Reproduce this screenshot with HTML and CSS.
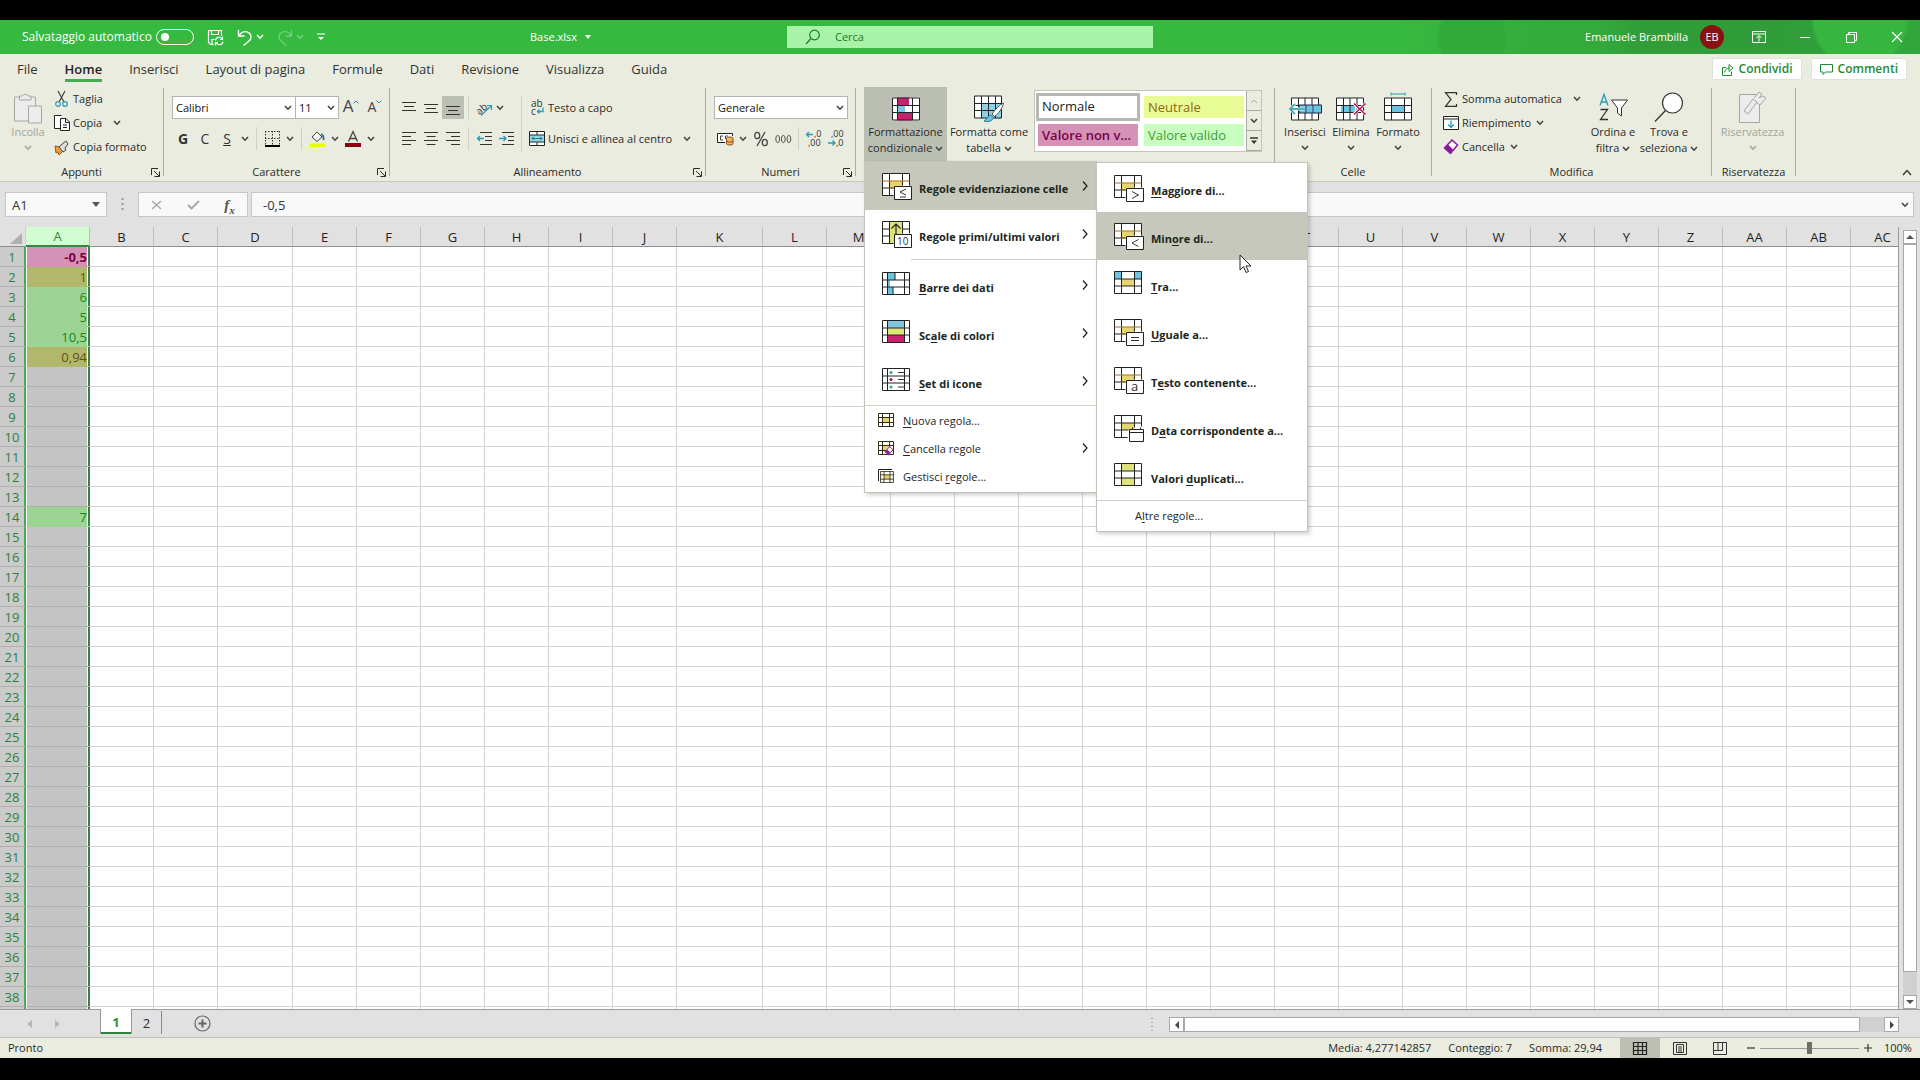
FILE: index.html
```html
<!DOCTYPE html>
<html lang="it">
<head>
<meta charset="utf-8">
<title>Base.xlsx</title>
<link rel="stylesheet" href="styles.css">
</head>
<body>
<svg class="defs" aria-hidden="true">
  <symbol id="chev" viewBox="0 0 8 6"><path d="M1 1l3 3.2L7 1" fill="none" stroke="currentColor" stroke-width="1.6"/></symbol>
  <symbol id="launch" viewBox="0 0 9 9"><path d="M.5 7V.5H7M3 3l5 5M8.500 3.500V8.500H3.500" fill="none" stroke="currentColor"/></symbol>
  <symbol id="right" viewBox="0 0 6 10"><path d="M1 .5L5 5 1 9.500" fill="none" stroke="currentColor" stroke-width="1.3"/></symbol>
  <symbol id="lines" viewBox="0 0 28 23"><path d="M.5.5h27v22H.5zM7.500.5v22M20.500.5v22M.5 8h27M.5 15h27" fill="none" stroke="#222"/></symbol>
  <symbol id="cellrule" viewBox="0 0 30 27">
    <path d="M.5.5h27v22H.5z" fill="#fff"/><path d="M7.500 8h13v7h-13z" fill="#e6d470"/>
    <path d="M.5.5h27M.5.5v22h11M7.500.5v22M20.500.5v12M27.500.5v12M.5 15h11" fill="none" stroke="#222"/><path d="M.5 8h27M7.500 15h5" stroke="#a8771c" fill="none"/>
    <path d="M12.500 13.500h17v13h-17z" fill="#fff" stroke="#222"/>
  </symbol>
  <symbol id="smallgrid" viewBox="0 0 16 14"><path d="M.5.5h15v13H.5z" fill="#fff"/><path d="M4.500 4.500h7v5h-7z" fill="#e6d470"/><path d="M.5.5h15v13H.5zM4.500.5v13M11.500.5v13M.5 4.500h15M.5 9.500h15" fill="none" stroke="#332d12"/></symbol>
  <symbol id="eraser" viewBox="0 0 16 16"><path d="M1.500 9l7.500-8 5.500 5-7 8.500z" fill="#fff" stroke="#8a1a9b" stroke-width="1.500"/><path d="M1.500 9L5 5.500l5 5-3 4z" fill="#8a1a9b"/></symbol>
</svg>

<header class="titlebar">
  <div class="quick">
    <label class="autosave">Salvataggio automatico <input type="checkbox" class="switch"></label>
    <button class="plain q-save" aria-label="Salva"><svg width="17" height="17" viewBox="0 0 17 17" fill="none" stroke="#fff" stroke-width="1.200"><path d="M7 15.500H3.500l-2-2V1.500h13V7M4.500 1.500v4h7v-4M5 15.500v-5h2.500"/><path d="M8.500 11.500a3.500 3.500 0 0 1 6.500-1.500M15.500 7.500V10.500H13M16 12.500a3.500 3.500 0 0 1-6.500 1.500M8.500 16.500v-3H11"/></svg></button>
    <button class="plain" aria-label="Annulla"><svg width="16" height="17" viewBox="0 0 16 17" fill="none" stroke="#fff" stroke-width="1.400"><path d="M1.500 1v6h6M1.800 6.700C5 2 9 2 11.500 3.500c4 2.600 2.500 7 .5 8.500L6.500 16.500"/></svg><svg class="chev" width="8" height="6"><use href="#chev"/></svg></button>
    <button class="plain dim" aria-label="Ripeti"><svg width="16" height="17" viewBox="0 0 16 17" fill="none" stroke="#fff" stroke-width="1.400"><path d="M14.500 1v6h-6M14.200 6.700C11 2 7 2 4.500 3.500c-4 2.600-2.500 7-.5 8.500l5.500 4.500"/></svg><svg class="chev" width="8" height="6"><use href="#chev"/></svg></button>
    <button class="plain" aria-label="Personalizza"><svg width="8" height="8" viewBox="0 0 8 8"><path d="M0 1h8" stroke="#fff"/><path d="M1 4h6L4 7z" fill="#fff"/></svg></button>
  </div>
  <div class="doc">Base.xlsx <svg width="6" height="4" viewBox="0 0 6 4"><path d="M0 0h6L3 4z" fill="#fff"/></svg></div>
  <label class="search"><svg width="16" height="16" viewBox="0 0 16 16" fill="none" stroke="#1c7a2a" stroke-width="1.200"><circle cx="9.500" cy="6" r="4.800"/><path d="M6 9.500L1 15"/></svg><input type="text" placeholder="Cerca" aria-label="Cerca"></label>
  <div class="account">
    <span>Emanuele Brambilla</span><span class="avatar">EB</span>
    <button class="win" aria-label="Opzioni barra multifunzione"><svg width="14" height="12" viewBox="0 0 14 12" fill="none" stroke="#fff"><path d="M.5.5h13v11H.5zM.5 3h13M7 10.500V5M4.500 7L7 4.500 9.500 7"/></svg></button>
    <button class="win" aria-label="Riduci"><svg width="10" height="12" viewBox="0 0 10 12"><path d="M0 6.500h10" stroke="#fff"/></svg></button>
    <button class="win" aria-label="Ripristina"><svg width="11" height="11" viewBox="0 0 11 11" fill="none" stroke="#fff"><path d="M.5 2.500h8v8h-8zM2.500 2.500v-2h8v8h-2"/></svg></button>
    <button class="win" aria-label="Chiudi"><svg width="12" height="12" viewBox="0 0 12 12"><path d="M1 1l10 10M11 1L1 11" stroke="#fff" stroke-width="1.200"/></svg></button>
  </div>
</header>

<nav class="tabs">
  <a href="#">File</a><a href="#" class="on">Home</a><a href="#">Inserisci</a><a href="#">Layout di pagina</a><a href="#">Formule</a><a href="#">Dati</a><a href="#">Revisione</a><a href="#">Visualizza</a><a href="#">Guida</a>
  <div class="share">
    <button><svg width="13" height="13" viewBox="0 0 13 13" fill="none" stroke="#1f8a34"><path d="M5 4.500H1.500v8h9V8.500M3.500 9.500c.5-3 2.500-4.500 5-4.500M8 1.500L12 5 8 8.500z"/></svg>Condividi</button>
    <button><svg width="13" height="13" viewBox="0 0 13 13" fill="none" stroke="#1f8a34"><path d="M.5 1.500h12v7.500H5.500L3 11.500V9H.5z"/></svg>Commenti</button>
  </div>
</nav>

<section class="ribbon">
  <div class="group g-clip">
    <div class="body">
      <button class="big disabled"><svg width="28" height="32" viewBox="0 0 28 32" fill="#ececec" stroke="#a3a8a0"><path d="M.5 5.500h21v24H.5z"/><path d="M5.500 8.500v-4h3a3 3 0 0 1 5.500 0h3v4z"/><path d="M14.500 14.500h13v17h-13z"/></svg><span>Incolla</span><svg class="chev" width="8" height="6"><use href="#chev"/></svg></button>
      <div class="stack">
        <button class="row"><svg width="16" height="17" viewBox="0 0 16 17" fill="none"><path d="M4 0l6 11M11 0L5 11" stroke="#444" stroke-width="1.200"/><circle cx="4" cy="13" r="2.300" stroke="#2a9ab5" stroke-width="1.200"/><circle cx="11" cy="13" r="2.300" stroke="#2a9ab5" stroke-width="1.200"/></svg>Taglia</button>
        <button class="row"><svg width="16" height="16" viewBox="0 0 16 16" fill="#fff" stroke="#222"><path d="M6 13.500H.5V.5h7"/><path d="M6.500 3.500h5.500l3.500 3.500v8.500h-9zM11.500 3.500v4h4M9 10h4M9 12.500h4"/></svg>Copia <svg class="chev gap" width="8" height="6"><use href="#chev"/></svg></button>
        <button class="row"><svg width="16" height="15" viewBox="0 0 16 15"><path d="M1 6l6 1 2 4-4 4-1-3-2 1z" fill="#e9a03c" stroke="#9a5a14"/><path d="M7 5l5-4 2 3-3 4 1 2-3 2-4-5z" fill="#ddd" stroke="#444"/></svg>Copia formato</button>
      </div>
    </div>
    <footer>Appunti<button class="launcher" aria-label="Appunti"><svg width="9" height="9"><use href="#launch"/></svg></button></footer>
  </div>
  <i class="sep"></i>
  <div class="group g-font">
    <div class="body rows">
      <div class="line">
        <span class="combo c-font"><select aria-label="Tipo di carattere"><option>Calibri</option></select><svg class="chev" width="8" height="6"><use href="#chev"/></svg></span>
        <span class="combo c-size"><select aria-label="Dimensione"><option>11</option></select><svg class="chev" width="8" height="6"><use href="#chev"/></svg></span>
        <button class="ib grow">A<svg width="6" height="4" viewBox="0 0 6 4"><path d="M.5 3.500L3 1l2.500 2.500" fill="none" stroke="#2a9ab5"/></svg></button>
        <button class="ib shrink">A<svg width="6" height="4" viewBox="0 0 6 4"><path d="M.5.5L3 3 5.500.5" fill="none" stroke="#2a9ab5"/></svg></button>
      </div>
      <div class="line">
        <button class="ib txt"><b>G</b></button><button class="ib txt">C</button><button class="ib txt"><u>S</u></button><button class="ck"><svg class="chev" width="8" height="6"><use href="#chev"/></svg></button>
        <i class="vs"></i>
        <button class="ib"><svg width="15" height="16" viewBox="0 0 15 16"><path d="M.5 0v14M14.500 0v14M7.500 0v14M0 .5h15M0 7.500h15" stroke="#333" stroke-dasharray="1.500 1.500"/><path d="M0 15h15" stroke="#000" stroke-width="2"/></svg></button><button class="ck"><svg class="chev" width="8" height="6"><use href="#chev"/></svg></button>
        <i class="vs"></i>
        <button class="ib"><svg width="17" height="16" viewBox="0 0 17 16"><path d="M3 6l5-5 5 5-5 4.500z" fill="#f4f4f4" stroke="#444"/><path d="M12 3c2 1 3 3 2.500 6" stroke="#1f6d91" stroke-width="1.800" fill="none"/><path d="M1 12.500h15V16H1z" fill="#e8fb00"/></svg></button><button class="ck"><svg class="chev" width="8" height="6"><use href="#chev"/></svg></button>
        <button class="ib"><svg width="16" height="16" viewBox="0 0 16 16"><path d="M3.500 10.500L8 .5l4.500 10M5 7.500h6" fill="none" stroke="#444" stroke-width="1.300"/><path d="M0 12h16v4H0z" fill="#8b0014"/></svg></button><button class="ck"><svg class="chev" width="8" height="6"><use href="#chev"/></svg></button>
      </div>
    </div>
    <footer>Carattere<button class="launcher" aria-label="Carattere"><svg width="9" height="9"><use href="#launch"/></svg></button></footer>
  </div>
  <i class="sep"></i>
  <div class="group g-align">
    <div class="body">
      <div class="rows">
        <div class="line">
          <button class="ib"><svg width="14" height="14" viewBox="0 0 14 14"><path d="M0 1.500h14M2 5.500h10M0 9.500h14" stroke="#333"/></svg></button><button class="ib"><svg width="14" height="14" viewBox="0 0 14 14"><path d="M0 3.500h14M2 7.500h10M0 11.500h14" stroke="#333"/></svg></button><button class="ib on"><svg width="14" height="14" viewBox="0 0 14 14"><path d="M0 5.500h14M2 9.500h10M0 13.500h14" stroke="#333"/></svg></button>
          <i class="vs"></i>
          <button class="ib"><svg width="17" height="16" viewBox="0 0 17 16"><text x="0" y="12" font-size="10" transform="rotate(-40 6 9)" fill="#333">ab</text><path d="M5 15.500L15 6M11 5.500h4.500V10" fill="none" stroke="#2a9ab5" stroke-width="1.200"/></svg></button><button class="ck"><svg class="chev" width="8" height="6"><use href="#chev"/></svg></button>
        </div>
        <div class="line">
          <button class="ib"><svg width="14" height="14" viewBox="0 0 14 14"><path d="M0 .5h14M0 4.500h9M0 8.500h14M0 12.500h9" stroke="#333"/></svg></button><button class="ib"><svg width="14" height="14" viewBox="0 0 14 14"><path d="M0 .5h14M2.500 4.500h9M0 8.500h14M2.500 12.500h9" stroke="#333"/></svg></button><button class="ib"><svg width="14" height="14" viewBox="0 0 14 14"><path d="M0 .5h14M5 4.500h9M0 8.500h14M5 12.500h9" stroke="#333"/></svg></button>
          <i class="vs"></i>
          <button class="ib"><svg width="15" height="14" viewBox="0 0 15 14"><path d="M3 .5h12M8 4.500h7M8 8.500h7M3 12.500h12" stroke="#333"/><path d="M7 6.500H.5M3 4L.5 6.500 3 9" fill="none" stroke="#2a9ab5" stroke-width="1.300"/></svg></button><button class="ib"><svg width="15" height="14" viewBox="0 0 15 14"><path d="M3 .5h12M9 4.500h6M9 8.500h6M3 12.500h12" stroke="#333"/><path d="M0 6.500h7M4.500 4L7 6.500 4.500 9" fill="none" stroke="#2a9ab5" stroke-width="1.300"/></svg></button>
        </div>
      </div>
      <i class="vs tall"></i>
      <div class="rows">
        <button class="line wide"><svg width="16" height="17" viewBox="0 0 16 17"><text x="2" y="8" font-size="10" fill="#333">ab</text><text x="2" y="16" font-size="10" fill="#333">c</text><path d="M14 8.500v4H8.500M10.500 10.500l-2 2 2 2" fill="none" stroke="#2a9ab5" stroke-width="1.300"/></svg>Testo a capo</button>
        <button class="line wide"><svg width="16" height="15" viewBox="0 0 16 15"><path d="M.5.5h15v14H.5z" fill="#fff" stroke="#222"/><path d="M1 4h14v7H1z" fill="#9bdbe6"/><path d="M.5 4h15M.5 11h15M8 .5V4M8 11v3.500" stroke="#222"/><path d="M3 7.500h10M5 5.500l-2 2 2 2M11 5.500l2 2-2 2" fill="none" stroke="#14788f"/></svg>Unisci e allinea al centro <svg class="chev gap" width="8" height="6"><use href="#chev"/></svg></button>
      </div>
    </div>
    <footer>Allineamento<button class="launcher" aria-label="Allineamento"><svg width="9" height="9"><use href="#launch"/></svg></button></footer>
  </div>
  <i class="sep"></i>
  <div class="group g-num">
    <div class="body rows">
      <span class="combo"><select aria-label="Formato numero"><option>Generale</option></select><svg class="chev" width="8" height="6"><use href="#chev"/></svg></span>
      <div class="line">
        <button class="ib"><svg width="17" height="15" viewBox="0 0 17 15"><path d="M8 11.500H.5V2.500h15V5" fill="#fff" stroke="#222"/><path d="M6 5H3.500v4H6M11 5H8.500v3" fill="none" stroke="#444"/><path d="M9.500 7.500c0-2 6.500-2 6.500 0v5c0 2-6.500 2-6.500 0z" fill="#f0b56a" stroke="#8a4c10"/><path d="M9.500 10c1 1.500 5.500 1.500 6.500 0" fill="none" stroke="#8a4c10"/></svg></button><button class="ck"><svg class="chev" width="8" height="6"><use href="#chev"/></svg></button>
        <button class="ib pct"><svg width="14" height="16" viewBox="0 0 14 16" fill="none" stroke="#444" stroke-width="1.300"><ellipse cx="3.200" cy="4.500" rx="2.500" ry="3.200"/><ellipse cx="10.800" cy="11.500" rx="2.500" ry="3.200"/><path d="M11 1L3 15"/></svg></button>
        <button class="ib zeros"><svg width="17" height="10" viewBox="0 0 17 10" fill="none" stroke="#555"><ellipse cx="2.700" cy="5" rx="1.900" ry="3.600"/><ellipse cx="8.300" cy="5" rx="1.900" ry="3.600"/><ellipse cx="13.900" cy="5" rx="1.900" ry="3.600"/></svg></button>
        <i class="vs"></i>
        <button class="ib"><svg width="16" height="17" viewBox="0 0 16 17"><text x="8" y="7" font-size="9" fill="#333">,0</text><text x="2" y="16" font-size="9" fill="#333">,00</text><path d="M7 4.500H.5M3 2L.5 4.500 3 7" fill="none" stroke="#2a9ab5" stroke-width="1.300"/></svg></button>
        <button class="ib"><svg width="16" height="17" viewBox="0 0 16 17"><text x="3" y="7" font-size="9" fill="#333">,00</text><text x="8" y="16" font-size="9" fill="#333">,0</text><path d="M0 13h7M4.500 10.500L7 13l-2.500 2.500" fill="none" stroke="#2a9ab5" stroke-width="1.300"/></svg></button>
      </div>
    </div>
    <footer>Numeri<button class="launcher" aria-label="Numeri"><svg width="9" height="9"><use href="#launch"/></svg></button></footer>
  </div>
  <i class="sep"></i>
  <div class="group g-style">
    <div class="body">
      <div class="anchor">
        <button class="big cond" aria-expanded="true"><svg width="28" height="23" viewBox="0 0 28 23"><path d="M0 0h28v23H0z" fill="#fff"/><path d="M5 0h12v8H5zM5 15h15v8H5z" fill="#c4246f"/><path d="M5 8h8v7H5z" fill="#7cc6e0"/><path d="M.5.5h27v22H.5zM5.500.5v22M20.500.5v22M.5 8h27M.5 15h27" fill="none" stroke="#222"/></svg><span>Formattazione<br>condizionale <svg class="chev" width="8" height="6"><use href="#chev"/></svg></span></button>

        <div class="menu main">
          <button class="mi on"><svg width="30" height="27" viewBox="0 0 30 27"><use href="#cellrule" width="30" height="27"/><path d="M24 16l-6 3 6 3M18 24h6" fill="none" stroke="#333"/></svg><span>Regole evidenziazione celle</span><svg class="ar" width="6" height="10"><use href="#right"/></svg></button>
          <button class="mi"><svg width="30" height="27" viewBox="0 0 30 27"><path d="M.5.5h27v22H.5z" fill="#fff"/><path d="M7.500.5h13v22h-13z" fill="#dde27c"/><path d="M.5.5h27M.5.5v22h11M7.500.5v22M20.500.5v12M27.500.5v12M.5 8h7M.5 15h7M20 8h7.500" fill="none" stroke="#222"/><path d="M14 13V3M9.500 7.500L14 3l4.500 4.500" fill="none" stroke="#222" stroke-width="1.200"/><path d="M12.500 13.500h17v13h-17z" fill="#fff" stroke="#222"/><text class="badge" x="15" y="24" font-size="10" fill="#333">10</text></svg><span>Regole <u>p</u>rimi/ultimi valori</span><svg class="ar" width="6" height="10"><use href="#right"/></svg></button>
          <hr class="inset">
          <button class="mi"><svg width="30" height="27" viewBox="0 0 30 27"><path d="M.5.5h27v22H.5z" fill="#fff"/><path d="M5 0h8v8H5zM5 8h3v7H5zM5 15h6v8H5z" fill="#6cc3df"/><path d="M.5.5h27v22H.5zM5.500.5v22M22.500.5v22M.5 8h27M.5 15h27M13 .5V8M11 15v7" fill="none" stroke="#222"/></svg><span><u>B</u>arre dei dati</span><svg class="ar" width="6" height="10"><use href="#right"/></svg></button>
          <button class="mi"><svg width="30" height="27" viewBox="0 0 30 27"><path d="M.5.5h27v22H.5z" fill="#fff"/><path d="M5 0h17v8H5z" fill="#7cc6e0"/><path d="M5 8h17v7H5z" fill="#e0e578"/><path d="M5 15h17v8H5z" fill="#c4246f"/><path d="M.5.5h27v22H.5zM5.500.5v22M22.500.5v22M.5 8h27M.5 15h27" fill="none" stroke="#222"/></svg><span>Sc<u>a</u>le di colori</span><svg class="ar" width="6" height="10"><use href="#right"/></svg></button>
          <button class="mi"><svg width="30" height="27" viewBox="0 0 30 27"><path d="M.5.5h27v22H.5zM5.500.5v22M22.500.5v22M.5 8h27M.5 15h27" fill="#fff" stroke="#222"/><path d="M16 4.500h6M16 11.500h6M16 19h6" stroke="#333"/><circle cx="9" cy="4.500" r="1.600" fill="#3aa79a"/><circle cx="9" cy="11.500" r="1.600" fill="#b01848"/><circle cx="9" cy="19" r="1.600" fill="#3aa79a"/></svg><span><u>S</u>et di icone</span><svg class="ar" width="6" height="10"><use href="#right"/></svg></button>
          <hr>
          <button class="mi sm"><svg width="16" height="14"><use href="#smallgrid"/></svg><span><u>N</u>uova regola...</span></button>
          <button class="mi sm"><svg width="16" height="15" viewBox="0 0 16 15"><use href="#smallgrid" width="16" height="14"/><use href="#eraser" x="6" y="5" width="10" height="10"/></svg><span><u>C</u>ancella regole</span><svg class="ar" width="6" height="10"><use href="#right"/></svg></button>
          <button class="mi sm"><svg width="16" height="14" viewBox="0 0 16 14"><path d="M.5 12V.5H14" fill="none" stroke="#222"/><use href="#smallgrid" x="2" y="2" width="14" height="12"/></svg><span>Gestisci <u>r</u>egole...</span></button>

          <div class="menu sub">
            <button class="mi"><svg width="30" height="27" viewBox="0 0 30 27"><use href="#cellrule" width="30" height="27"/><path d="M18 16.500l6.500 3.500-6.500 3.500" fill="none" stroke="#333"/></svg><span><u>M</u>aggiore di...</span></button>
            <button class="mi on"><svg width="30" height="27" viewBox="0 0 30 27"><use href="#cellrule" width="30" height="27"/><path d="M24.500 16.500L18 20l6.500 3.500" fill="none" stroke="#333"/></svg><span>Min<u>o</u>re di...</span></button>
            <button class="mi"><svg width="30" height="27" viewBox="0 0 30 27"><path d="M.5.5h27v22H.5z" fill="#fff"/><path d="M0 0h8v8H0zM20 0h8v8h-8z" fill="#6cc3df"/><path d="M7.500 8h13v7h-13z" fill="#e6d470"/><use href="#lines" width="28" height="23"/></svg><span><u>T</u>ra...</span></button>
            <button class="mi"><svg width="30" height="27" viewBox="0 0 30 27"><use href="#cellrule" width="30" height="27"/><path d="M17 18.500h8M17 21.500h8" stroke="#333"/></svg><span><u>U</u>guale a...</span></button>
            <button class="mi"><svg width="30" height="27" viewBox="0 0 30 27"><use href="#cellrule" width="30" height="27"/><text class="badge" x="17" y="24" font-size="13" fill="#333">a</text></svg><span>T<u>e</u>sto contenente...</span></button>
            <button class="mi"><svg width="30" height="27" viewBox="0 0 30 27"><path d="M7.500 8h13v7h-13z" fill="#e6d470"/><path d="M.5.5h27M.5.5v22h13M7.500.5v22M20.500.5v12M27.500.5v11M.5 8h27M.5 15h14" fill="none" stroke="#222"/><path d="M15.500 14.500h14v12h-14zM15.500 17.500h14M18.500 12.500v2M26.500 12.500v2" fill="#fff" stroke="#222"/></svg><span>D<u>a</u>ta corrispondente a...</span></button>
            <button class="mi"><svg width="30" height="27" viewBox="0 0 30 27"><path d="M.5.5h27v22H.5z" fill="#fff"/><path d="M7.500 0h13v8h-13zM7.500 15h13v8h-13z" fill="#dde27c"/><use href="#lines" width="28" height="23"/></svg><span>Valori <u>d</u>uplicati...</span></button>
            <hr>
            <button class="mi sm more"><span>A<u>l</u>tre regole...</span></button>
            <svg class="cursor" width="13" height="20" viewBox="0 0 13 20"><path d="M1 1v15l3.500-3.500L7 18.500l2.500-1L7 12h5z" fill="#fff" stroke="#222"/></svg>
          </div>
        </div>
      </div>
      <button class="big fmt"><svg width="31" height="27" viewBox="0 0 31 27"><path d="M.5.5h27v22H.5z" fill="#fff"/><path d="M8 8h20v15H8z" fill="#8fd0e6"/><path d="M.5.5h27v22H.5zM7.500.5v22M14.500.5v22M21.500.5v22M.5 8h27M.5 15h27" fill="none" stroke="#222"/><path d="M29.500 7.500c-4 2-9 7-11.500 11l2.500 2.500c4-3 8-8 9-13.500z" fill="#fff" stroke="#555"/><path d="M10 25.500c2.500-.5 3-5 6.500-6l3 2.500c-1 3.500-5 5-9.500 3.500z" fill="#6cc3df" stroke="#2a7d98"/></svg><span>Formatta come<br>tabella <svg class="chev" width="8" height="6"><use href="#chev"/></svg></span></button>
      <div class="gallery">
        <div class="swatches"><button class="s-norm">Normale</button><button class="s-neu">Neutrale</button><button class="s-bad">Valore non v...</button><button class="s-ok">Valore valido</button></div>
        <div class="spin"><button class="off" aria-label="Su"><svg width="8" height="6" viewBox="0 0 8 6"><path d="M1 5l3-3 3 3" fill="none" stroke="#aaa"/></svg></button><button aria-label="Giù"><svg class="chev" width="8" height="6"><use href="#chev"/></svg></button><button aria-label="Altro"><svg width="8" height="8" viewBox="0 0 8 8"><path d="M0 1h8" stroke="#333" stroke-width="1.500"/><path d="M1 3.500h6L4 7z" fill="#333"/></svg></button></div>
      </div>
    </div>
  </div>
  <i class="sep"></i>
  <div class="group g-cells">
    <div class="body">
      <button class="big"><svg width="33" height="23" viewBox="0 0 33 23"><path d="M2.500.5h27v22h-27z" fill="#fff"/><path d="M2.500.5h27v22h-27zM9.500.5v22M16 .5v22M23 .5v22M2.500 8h27" fill="none" stroke="#222"/><path d="M10 7.500h22.500v8H10z" fill="#6cc3df" stroke="#224"/><path d="M17 7.500v8M24 7.500v8" stroke="#247"/><path d="M16 11.500H1M6 6.500l-5 5 5 5" fill="none" stroke="#e9ecdf" stroke-width="3"/><path d="M16 11.500H1M6 6.500l-5 5 5 5" fill="none" stroke="#2a9ab5" stroke-width="1.400"/></svg><span>Inserisci</span><svg class="chev" width="8" height="6"><use href="#chev"/></svg></button>
      <button class="big"><svg width="31" height="23" viewBox="0 0 31 23"><path d="M.5.5h27v22H.5z" fill="#fff"/><path d="M5 8h14v7H5z" fill="#6cc3df"/><path d="M.5.5h27v22H.5zM7.500.5v22M14 .5v22M21 .5v22M.5 8h27M.5 15h27" fill="none" stroke="#222"/><path d="M18 6.500l11 10M29 6.500l-11 10" stroke="#fff" stroke-width="3"/><path d="M18 6l11.500 11M29.500 6L18 17" stroke="#b0165c" stroke-width="1.600"/></svg><span>Elimina</span><svg class="chev" width="8" height="6"><use href="#chev"/></svg></button>
      <button class="big hat"><svg width="28" height="28" viewBox="0 0 28 28"><path d="M.5 5.500h27v22H.5z" fill="#fff"/><path d="M7.500 13h13v7h-13z" fill="#6cc3df"/><path d="M.5 5.500h27v22H.5zM7.500 5.500v22M20.500 5.500v22M.5 13h27M.5 20h27" fill="none" stroke="#222"/><path d="M7 1.500h14M7 0v3M21 0v3" stroke="#2a9ab5"/></svg><span>Formato</span><svg class="chev" width="8" height="6"><use href="#chev"/></svg></button>
    </div>
    <footer>Celle</footer>
  </div>
  <i class="sep"></i>
  <div class="group g-edit">
    <div class="body">
      <div class="stack">
        <button class="row"><svg width="16" height="15" viewBox="0 0 16 15"><path d="M13.500 3V.7h-11L8 7.500 2.500 14.300h11V12" fill="none" stroke="#333" stroke-width="1.200"/></svg>Somma automatica <svg class="chev gap" width="8" height="6"><use href="#chev"/></svg></button>
        <button class="row"><svg width="16" height="14" viewBox="0 0 16 14"><path d="M.5.5h15v13H.5zM.5 3h15" fill="#fff" stroke="#222"/><path d="M8 4.500v7M5 8.500l3 3 3-3" fill="none" stroke="#2a9ab5" stroke-width="1.300"/></svg>Riempimento <svg class="chev" width="8" height="6"><use href="#chev"/></svg></button>
        <button class="row"><svg width="16" height="16"><use href="#eraser"/></svg>Cancella <svg class="chev" width="8" height="6"><use href="#chev"/></svg></button>
      </div>
      <button class="big"><svg width="29" height="28" viewBox="0 0 29 28" fill="none"><path d="M1 12L5 1l4 11M2.500 8.500h5" stroke="#2a9ab5" stroke-width="1.300"/><path d="M1.500 16h7l-7 10h7.500" stroke="#333" stroke-width="1.300"/><path d="M12.500 6.500h16l-6 8v8l-4-3v-5z" fill="#fff" stroke="#333"/></svg><span>Ordina e<br>filtra <svg class="chev" width="8" height="6"><use href="#chev"/></svg></span></button>
      <button class="big"><svg width="30" height="30" viewBox="0 0 30 30"><circle cx="18.500" cy="10.500" r="10" fill="#fff" stroke="#333" stroke-width="1.200"/><path d="M11.500 18L1 29" stroke="#333" stroke-width="1.300"/></svg><span>Trova e<br>seleziona <svg class="chev" width="8" height="6"><use href="#chev"/></svg></span></button>
    </div>
    <footer>Modifica</footer>
  </div>
  <i class="sep"></i>
  <div class="group g-priv">
    <div class="body">
      <button class="big disabled"><svg width="28" height="31" viewBox="0 0 28 31" fill="#ececec" stroke="#a3a8a0"><path d="M.5 2.500h20v28H.5z"/><path d="M5 19L14 7l4 3-9 12zM15 6l5-6 3 2-3 4 4-2 3 2-6 7-3-2"/></svg><span>Riservatezza</span><svg class="chev" width="8" height="6"><use href="#chev"/></svg></button>
    </div>
    <footer>Riservatezza</footer>
  </div>
  <i class="sep"></i>
  <button class="collapse" aria-label="Comprimi"><svg width="10" height="7" viewBox="0 0 10 7"><path d="M1 6l4-4.500L9 6" fill="none" stroke="#333" stroke-width="1.300"/></svg></button>
</section>

<section class="formula">
  <label class="name"><input type="text" value="A1" aria-label="Casella nome"><svg width="8" height="5" viewBox="0 0 8 5"><path d="M0 0h8L4 5z" fill="#555"/></svg></label>
  <svg class="dots" width="3" height="12" viewBox="0 0 3 12"><path d="M.5 0h2v2h-2zM.5 5h2v2h-2zM.5 10h2v2h-2z" fill="#999"/></svg>
  <div class="fx">
    <button aria-label="Annulla"><svg width="11" height="10" viewBox="0 0 11 10"><path d="M1 1l9 8M10 1L1 9" stroke="#aaa" stroke-width="1.500"/></svg></button>
    <button aria-label="Invio"><svg width="13" height="10" viewBox="0 0 13 10"><path d="M1 5l3.500 3.500L12 1" fill="none" stroke="#aaa" stroke-width="2"/></svg></button>
    <button class="fn" aria-label="Inserisci funzione">f<sub>x</sub></button>
  </div>
  <label class="input"><input type="text" value="-0,5" aria-label="Barra della formula"><svg class="chev" width="8" height="6"><use href="#chev"/></svg></label>
</section>

<main class="sheet">
  <div class="view"><table class="grid" id="grid"></table></div>
  <div class="vbar">
    <button aria-label="Su"><svg width="8" height="4" viewBox="0 0 8 4"><path d="M0 4h8L4 0z" fill="#555"/></svg></button>
    <div class="track"><div class="thumb"></div></div>
    <button aria-label="Giù"><svg width="8" height="4" viewBox="0 0 8 4"><path d="M0 0h8L4 4z" fill="#555"/></svg></button>
  </div>
</main>

<div class="bottom">
  <div class="arrows"><svg width="5" height="8" viewBox="0 0 5 8"><path d="M5 0v8L0 4z" fill="#b5b5b5"/></svg><svg width="5" height="8" viewBox="0 0 5 8"><path d="M0 0v8l5-4z" fill="#b5b5b5"/></svg></div>
  <button class="st on">1</button><button class="st">2</button>
  <button class="add" aria-label="Nuovo foglio"><svg width="17" height="17" viewBox="0 0 17 17" fill="none" stroke="#666"><circle cx="8.500" cy="8.500" r="7.500" stroke-width="1.200"/><path d="M4.500 8.500h8M8.500 4.500v8" stroke-width="2"/></svg></button>
  <svg class="dots" width="3" height="13" viewBox="0 0 3 13"><path d="M.5 0h1v1h-1zM.5 4h1v1h-1zM.5 8h1v1h-1zM.5 12h1v1h-1z" fill="#777"/></svg>
  <div class="hbar">
    <button aria-label="Sinistra"><svg width="4" height="8" viewBox="0 0 4 8"><path d="M4 0v8L0 4z" fill="#444"/></svg></button>
    <div class="track"><div class="thumb"></div></div>
    <button aria-label="Destra"><svg width="4" height="8" viewBox="0 0 4 8"><path d="M0 0v8l4-4z" fill="#444"/></svg></button>
  </div>
</div>

<footer class="status">
  <span class="ready">Pronto</span>
  <div class="stats"><span>Media: 4,277142857</span><span>Conteggio: 7</span><span>Somma: 29,94</span></div>
  <div class="views">
    <button class="vw on" aria-label="Normale"><svg width="14" height="13" viewBox="0 0 14 13"><path d="M.5.5h13v12H.5zM5 .5v12M9.500.5v12M.5 4.500h13M.5 8.500h13" fill="none" stroke="#222" stroke-width="1.200"/></svg></button>
    <button class="vw" aria-label="Layout di pagina"><svg width="14" height="13" viewBox="0 0 14 13"><path d="M.5.5h13v12H.5zM3.500 2.500h7v8h-7zM5 5h4M5 7h4M5 9h4" fill="none" stroke="#333"/></svg></button>
    <button class="vw" aria-label="Interruzioni di pagina"><svg width="14" height="13" viewBox="0 0 14 13"><path d="M.5.5h13v12H.5zM.5 8.500h9V.5M5 .5v8" fill="none" stroke="#333"/></svg></button>
  </div>
  <button class="zm" aria-label="Riduci zoom"><svg width="8" height="8" viewBox="0 0 8 8"><path d="M0 4h8" stroke="#333" stroke-width="1.200"/></svg></button>
  <input type="range" class="zoom" value="50" aria-label="Zoom">
  <button class="zm" aria-label="Aumenta zoom"><svg width="8" height="8" viewBox="0 0 8 8"><path d="M0 4h8M4 0v8" stroke="#333" stroke-width="1.200"/></svg></button>
  <span class="pctv">100%</span>
</footer>
<script src="grid.js"></script>
</body>
</html>
```
FILE: grid.js
```js
// Builds the worksheet: column headers A..AC and 39 rows, column A selected.
var cols = [];
for (var i = 0; i < 29; i++) {
  cols.push(i < 26 ? String.fromCharCode(65 + i) : 'A' + String.fromCharCode(39 + i));
}
var widths = { D: 75, K: 86 };
var values = {
  1: ['-0,5', 'bad'], 2: ['1', 'neutral'], 3: ['6', 'good'], 4: ['5', 'good'],
  5: ['10,5', 'good'], 6: ['0,94', 'neutral'], 14: ['7', 'good']
};
var html = '<colgroup><col style="width:26px">';
cols.forEach(function (c) { html += '<col style="width:' + (widths[c] || 64) + 'px">'; });
html += '</colgroup><thead><tr><th class="corner"><svg width="12" height="11" viewBox="0 0 12 11"><path d="M12 0v11H0z" fill="#b0b0b0"/></svg></th>';
cols.forEach(function (c) { html += '<th' + (c === 'A' ? ' class="sel"' : '') + '>' + c + '</th>'; });
html += '</tr></thead><tbody>';
for (var r = 1; r < 40; r++) {
  var v = values[r] || ['', ''];
  html += '<tr><th>' + r + '</th><td class="a ' + v[1] + '">' + v[0] + '</td>';
  for (var c = 1; c < cols.length; c++) html += '<td></td>';
  html += '</tr>';
}
document.getElementById('grid').innerHTML = html + '</tbody>';
```
FILE: styles.css
```css
* { box-sizing: border-box; }
body {
  margin: 0; padding: 20px 0 22px; height: 100vh; background: #000; color: #2b2b28;
  display: flex; flex-direction: column; overflow: hidden;
  font: 11px/16px "Open Sans", "Noto Sans", sans-serif;
}
button, input, select { font: inherit; color: inherit; background: none; border: 0; padding: 0; margin: 0; border-radius: 0; outline: 0; }
button { white-space: nowrap; }
svg { display: block; flex: none; overflow: visible; }
.defs { position: absolute; width: 0; height: 0; overflow: hidden; }
.chev { color: #444; }
.badge { font-weight: 400; }

/* title bar */
.titlebar {
  flex: none; height: 34px; display: grid; grid-template-columns: 530px 257px 366px 1fr; align-items: center;
  color: #fff; font-size: 12px;
  background:
    radial-gradient(circle at 1472px 18px, #32a93b 0 32px, transparent 36px),
    radial-gradient(circle at 1860px 0, #36b53f 0 46px, transparent 49px),
    linear-gradient(90deg, #36b93f 0 1400px, #34a93c 1560px 1600px, #309d39 1640px 1780px, #32a53b 1900px);
}
.quick { display: flex; align-items: center; gap: 13px; padding-left: 22px; }
.autosave { display: flex; align-items: center; gap: 4px; white-space: nowrap; }
.switch { appearance: none; width: 38px; height: 16px; border: 1px solid #fff; border-radius: 8px; display: flex; align-items: center; padding-left: 4px; }
.switch::before { content: ""; width: 8px; height: 8px; border-radius: 50%; background: #fff; }
.plain { display: flex; align-items: center; gap: 3px; }
.titlebar .chev { color: #fff; }
.dim { opacity: .3; }
.doc { display: flex; align-items: center; gap: 8px; font-size: 11px; }
.search { height: 22px; background: #a9f3a9; display: flex; align-items: center; gap: 14px; padding-left: 18px; }
.search input { flex: 1; min-width: 0; font-size: 11px; }
.search input::placeholder { color: #1c7a2a; opacity: 1; }
.account { display: flex; align-items: center; justify-content: flex-end; font-size: 11px; }
.avatar { width: 24px; height: 24px; border-radius: 50%; background: #8b1010; margin: 0 12px; text-align: center; line-height: 24px; }
.win { width: 46px; height: 34px; display: grid; place-items: center; }

/* tabs */
.tabs { flex: none; height: 33px; background: #e9ecdf; display: flex; align-items: flex-start; gap: 27px; padding-left: 17px; font-size: 13px; line-height: 18px; }
.tabs a { color: #33332e; text-decoration: none; padding: 6px 0 1px; border-bottom: 3px solid transparent; white-space: nowrap; }
.tabs .on { font-weight: 600; border-color: #46ad4e; color: #222; }
.share { margin: 4px 13px 0 auto; display: flex; gap: 9px; }
.share button { height: 22px; background: #fff; border: 1px solid #e0e2d8; border-radius: 2px; color: #1f8a34; font-weight: 600; font-size: 12px; display: flex; align-items: center; gap: 5px; padding: 0 8px; }

/* ribbon */
.ribbon { flex: none; height: 95px; background: #e9ecdf; border-bottom: 1px solid #c4c7ba; display: flex; align-items: flex-start; position: relative; z-index: 2; }
.sep { flex: none; width: 1px; height: 88px; margin-top: 1px; background: #a9aca2; }
.group { flex: none; height: 94px; display: flex; flex-direction: column; }
.body { height: 76px; display: flex; }
.group footer { line-height: 18px; text-align: center; position: relative; }
.launcher { position: absolute; right: 3px; top: 5px; }
.g-clip { width: 163px; }
.g-font { width: 225px; }
.g-align { width: 315px; }
.g-num { width: 149px; }
.g-style { width: 418px; }
.g-cells { width: 156px; }
.g-edit { width: 279px; }
.g-priv { width: 83px; }
.big { display: flex; flex-direction: column; align-items: center; padding-top: 7px; text-align: center; }
.big > svg:first-child { height: 30px; }
.big span .chev { display: inline-block; }
.disabled, .disabled .chev { color: #a3a69c; }
.big > .chev { margin-top: 5px; }
.row { display: flex; align-items: center; gap: 3px; height: 24px; }
.row .chev { margin-left: 2px; }
.row .chev.gap, .wide .chev.gap { margin-left: 8px; }
.stack { display: flex; flex-direction: column; }
.g-clip .body { padding-left: 10px; gap: 8px; }
.g-clip .big { width: 36px; padding-top: 4px; }
.g-clip .big > svg:first-child, .g-priv .big > svg:first-child { height: 33px; }
.rows { display: flex; flex-direction: column; gap: 8px; padding-top: 9px; }
.line { display: flex; align-items: center; height: 23px; }
.ib { width: 22px; height: 23px; display: grid; place-items: center; flex: none; }
.ib.on { background: #bcbfb3; }
.ck { width: 10px; height: 23px; display: grid; place-items: center; }
.vs { width: 1px; height: 23px; background: #cfd2c6; margin: 0 4px; }
.vs.tall { height: 56px; margin: 9px 7px 0 4px; }
.txt { font-size: 14px; color: #333; }
.combo { height: 23px; display: flex; align-items: center; background: #fff; border: 1px solid #b4b6ad; position: relative; }
.combo select { appearance: none; width: 100%; height: 21px; padding-left: 3px; color: #111; }
.combo .chev { position: absolute; right: 3px; pointer-events: none; }
.c-font { width: 124px; }
.c-size { width: 44px; margin-left: -1px; }
.g-font .rows { padding-left: 8px; }
.grow, .shrink { width: 24px; display: flex; align-items: flex-start; justify-content: center; font-size: 17px; line-height: 20px; color: #444; }
.shrink { font-size: 14px; line-height: 22px; }
.grow svg, .shrink svg { margin-top: 4px; }
.g-font .ck { width: 14px; }
.g-align .body > .rows:first-child { padding-left: 8px; }
.wide { gap: 3px; }
.g-num .rows { padding: 9px 7px 0 8px; }
.g-num .ck { width: 14px; }
.g-style .body { padding-left: 8px; }
.anchor { position: relative; }
.cond { width: 83px; height: 74px; background: #bbbeb2; }
.fmt { width: 84px; margin-right: 3px; }
.gallery { display: flex; width: 228px; height: 62px; margin-top: 3px; border: 1px solid #c3c5bc; }
.swatches { flex: 1; background: #fff; display: grid; grid-template-columns: 104px 100px; grid-template-rows: 28px 22px; gap: 3px 4px; padding: 2px 1px; }
.swatches button { font-size: 13px; text-align: left; padding-left: 4px; }
.swatches .s-norm { border: 3px solid #b5b9b2; color: #222; padding: 0 0 2px 3px; }
.s-neu { background: #e9fb94; color: #8a6a10; height: 22px; align-self: center; }
.swatches .s-bad { background: #d592b7; color: #7a0046; font-weight: 600; margin: 0 2px; }
.s-ok { background: #c8ffc0; color: #3f9a3c; }
.spin { width: 15px; display: grid; grid-template-rows: 20px 20px 20px; border-left: 1px solid #a9aca2; }
.spin button { display: grid; place-items: center; border-bottom: 1px solid #a9aca2; }
.g-cells .body { padding-left: 7px; }
.g-cells .big { width: 46px; }
.g-cells .hat { padding-top: 2px; width: 48px; }
.g-cells .hat > svg:first-child { height: 35px; }
.g-edit .body { padding-left: 11px; }
.g-edit .stack { width: 142px; }
.g-edit .big { width: 56px; padding-top: 4px; }
.g-edit .big > svg:first-child { height: 33px; }
.g-priv .big { width: 81px; padding-top: 4px; }
.collapse { margin: 82px 8px 0 auto; }

/* menus */
.menu { position: absolute; background: #fff; border: 1px solid #c3c5ba; box-shadow: 2px 2px 4px rgba(0, 0, 0, .2); text-align: left; }
.main { left: 0; top: 74px; width: 233px; }
.sub { left: 231px; top: 0; width: 212px; padding-top: 1px; }
.mi { width: 100%; height: 48px; display: flex; align-items: center; padding: 0 8px 0 17px; gap: 7px; font-weight: 700; color: #20261c; }
.mi span { flex: 1; text-align: left; padding-top: 5px; }
.mi.on { background: #c5c8ba; }
.mi.sm { height: 28px; padding-left: 13px; gap: 9px; font-weight: 400; }
.mi.sm span { padding-top: 1px; }
.sub .mi.more { padding-left: 38px; }
.menu hr { margin: 0; border: 0; height: 1px; background: #cfd0c6; }
.menu hr.inset { margin: 1px 0 1px 46px; }
.main { padding-bottom: 2px; }
.sub { padding-bottom: 2px; }
.menu u { text-underline-offset: 2px; }
.cursor { position: absolute; left: 142px; top: 91px; }

/* formula bar */
.formula { flex: none; height: 45px; padding: 10px 6px 0 5px; display: flex; align-items: flex-start; background: #e1e1e1; font-size: 13px; color: #333; }
.name, .fx, .input { height: 25px; background: #f9f9f9; border: 1px solid #c6c6c6; display: flex; align-items: center; }
.name { width: 102px; padding: 0 6px; }
.name input { flex: 1; min-width: 0; }
.formula .dots { margin: 6px 14px; }
.fx { width: 110px; justify-content: space-around; margin-right: 3px; }
.fn { font: italic 700 15px/20px "Liberation Serif", serif; color: #555; }
.fn sub { font-size: 11px; line-height: 0; }
.input { flex: 1; padding: 0 4px 0 11px; }
.input input { flex: 1; }

/* worksheet */
.sheet { flex: 1; min-height: 0; display: flex; background: #e1e1e1; border-bottom: 1px solid #9c9c9c; }
.view { flex: 1; min-width: 0; overflow: hidden; border-right: 1px solid #9c9c9c; background: #fff; }
.grid { table-layout: fixed; width: 1909px; border-collapse: separate; border-spacing: 0; font-size: 13px; line-height: 18px; }
.grid th, .grid td { padding: 0; height: 20px; font-weight: 400; }
.grid td { border: solid #d2d2d2; border-width: 0 1px 1px 0; text-align: right; }
.grid thead th { background: #e1e1e1; border-right: 1px solid #bdbdbd; border-bottom: 1px solid #8e8e8e; color: #222; }
.grid .corner { border-right-color: #cfcfcf; }
.corner svg { margin: 3px 0 0 10px; }
.grid thead .sel { background: #d3fcd3; color: #37843c; border-bottom: 2px solid #318a40; }
.grid tbody th { background: #cbcbcb; color: #2f8040; border-right: 2px solid #45ad50; border-bottom: 1px solid #b0b0b0; }
.grid .a { background: #c4c4c4; border-left: 1px solid #fff; border-right: 0; border-bottom-color: #adadad; box-shadow: inset -2px 0 #3d7d4b, inset -3px 0 #fff; padding-right: 3px; }
.grid .bad { background: #d592b7; color: #7a0046; font-weight: 700; border-bottom-color: #d592b7; }
.grid .neutral { background: #b2b86b; color: #5f5510; border-bottom-color: #b2b86b; }
.grid .good { background: #9bd493; color: #118a1b; border-bottom-color: #9bd493; }
.vbar { width: 21px; padding: 3px 3px 0 4px; display: flex; flex-direction: column; }
.vbar button, .hbar button { background: #fff; border: 1px solid #a8a8a8; display: grid; place-items: center; flex: none; }
.vbar button { height: 14px; }
.track { flex: 1; background: #d0d0d0; }
.thumb { background: #fff; border: 1px solid #a8a8a8; }
.vbar .thumb { height: 97%; }

/* sheet tabs */
.bottom { flex: none; height: 27px; display: flex; background: #e1e1e1; }
.arrows { width: 100px; display: flex; gap: 23px; padding: 10px 0 0 27px; }
.st { height: 23px; width: 30px; font-size: 13px; border-right: 1px solid #888; margin-top: 1px; }
.st.on { width: 32px; height: 25px; margin-top: -1px; background: #fff; color: #2f8a40; font-weight: 700; border: 1px solid #999; border-width: 0 1px; box-shadow: inset 0 -2px #31803f; }
.add { height: 27px; margin-left: 32px; }
.bottom .dots { margin: 8px 15px 0 auto; }
.hbar { width: 38%; height: 15px; margin: 7px 21px 0 0; display: flex; }
.hbar button { width: 15px; }
.hbar .thumb { width: 96.500%; height: 100%; }

/* status bar */
.status { flex: none; height: 21px; background: #e9ecdf; border-top: 1px solid #bfc1b7; display: flex; align-items: center; padding: 0 7px 0 8px; }
.stats { display: flex; gap: 17px; margin: 0 18px 0 auto; }
.views { display: flex; margin-right: 2px; }
.vw { width: 40px; height: 20px; display: grid; place-items: center; }
.vw.on { background: #bcbfb3; }
.zm { margin: 0 5px; }
.zoom { appearance: none; width: 99px; height: 14px; background: linear-gradient(#999, #999) center / 100% 1px no-repeat; }
.zoom::-webkit-slider-thumb { appearance: none; width: 5px; height: 12px; background: #6c7068; }
.pctv { margin-left: 7px; width: 29px; }
```
